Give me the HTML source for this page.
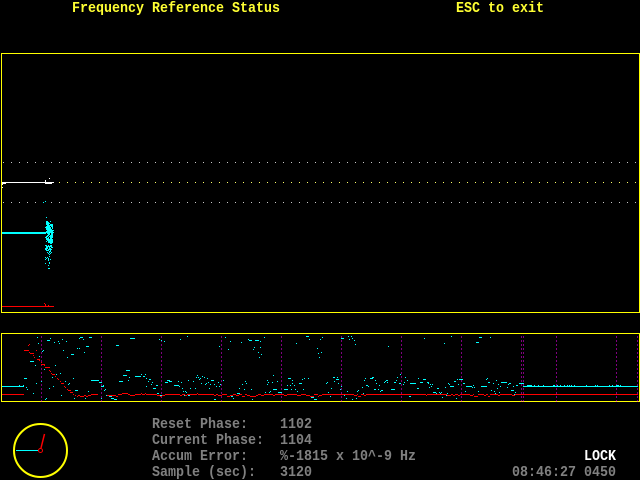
<!DOCTYPE html>
<html><head><meta charset="utf-8"><title>Frequency Reference Status</title>
<style>
html,body{margin:0;padding:0;background:#000;width:640px;height:480px;overflow:hidden}
svg{display:block}
text{font-family:"Liberation Mono",monospace;font-size:15px;font-weight:bold;white-space:pre}
.y{fill:#ffff33}
.g{fill:#808080}
.w{fill:#fff}
</style></head><body>
<svg width="640" height="480" viewBox="0 0 640 480" xmlns="http://www.w3.org/2000/svg">
<rect width="640" height="480" fill="#000"/>
<text class="y" x="72" y="12" textLength="208" lengthAdjust="spacingAndGlyphs">Frequency Reference Status</text>
<text class="y" x="456" y="12" textLength="88" lengthAdjust="spacingAndGlyphs">ESC to exit</text>
<g shape-rendering="crispEdges" fill="none" transform="translate(0,.5)">
<path stroke="#ffff00" d="M1 53h639M1 312h639M1.5 53v259M639.5 53v259M1 333h639M1 401h639M1.5 333v68M639.5 333v68"/>
<path stroke="#c8c8c8" stroke-dasharray="1 7" d="M3 162H639M3 202H639"/>
<path stroke="#ffff66" stroke-dasharray="1 7" d="M59 182H639"/>
<path stroke="#fff" d="M2 182h52M49 178h1M45 180h1M45 181h1M45 183h7M2 183h4M2 184h1M2 187h1"/>
<path stroke="#00ffff" d="M2 232h44M2 233h44M45 201h1M43 202h1M46 217h1M46 221h2M50 221h1M46 222h3M46 223h4M46 224h3M50 224h3M47 225h6M46 226h4M51 226h2M45 227h6M52 227h1M46 228h5M52 228h1M46 229h6M47 230h7M46 231h7M46 232h8M47 233h3M51 233h2M48 234h2M51 234h2M47 235h2M50 235h3M46 236h2M49 236h4M45 237h2M48 237h1M50 237h3M46 238h3M50 238h2M46 239h7M47 240h6M46 241h1M48 241h5M48 242h5M50 243h2M45 245h2M48 245h1M50 245h2M46 246h6M46 247h2M49 247h1M51 247h2M45 248h3M49 248h2M45 249h2M48 249h4M46 250h3M50 250h1M49 251h2M47 252h1M49 252h1M51 252h1M48 253h1M50 253h1M49 254h1M49 256h1M45 257h1M47 257h1M46 258h1M48 258h1M45 259h1M48 259h1M50 259h1M48 260h1M49 262h1M45 263h1M49 263h1M48 265h1M48 268h2"/>
<path stroke="#ff0000" d="M2 306h52M44 303h1M45 304h1M45 305h1M48 305h1"/>
<g stroke="#ff00ff" stroke-dasharray="1 3">
<path d="M41.5 336V401M101.5 336V401M161.5 336V401M221.5 336V401M281.5 336V401M341.5 336V401M401.5 336V401M461.5 336V401M521.5 336V401M523.5 336V401M556.5 336V401M616.5 336V401M637.5 336V401"/>
</g>
<path stroke="#00ffff" d="M2 386h18M20 386h4M19 385h1M23 385h1M26 387h1M27 389h1M33 393h1M37 337h1M38 343h1M50 338h1M47 340h3M54 342h1M58 341h1M59 343h1M62 339h1M66 341h1M79 338h1M80 337h3M83 339h1M89 337h3M86 346h3M77 348h1M79 348h1M63 350h1M84 352h1M71 354h3M67 357h1M43 350h1M42 351h1M39 356h1M34 357h1M30 361h4M35 365h1M55 365h1M44 369h1M56 374h1M60 373h1M52 377h1M24 378h3M73 378h1M91 380h8M99 382h3M103 385h1M101 386h3M105 389h1M104 390h1M88 391h1M75 390h3M69 383h1M68 384h1M65 381h1M41 381h1M36 383h1M49 388h1M53 386h1M61 395h1M74 398h1M85 398h1M46 398h1M45 399h1M101 398h1M106 395h3M109 396h3M111 398h3M114 399h3M116 345h3M126 370h4M123 375h4M119 381h4M129 377h1M128 380h1M130 338h5M135 376h6M141 374h1M145 374h1M143 376h2M146 378h1M149 379h2M148 381h1M152 382h1M151 384h1M156 385h2M146 386h1M153 388h3M157 393h2M159 395h5M159 339h1M161 340h1M164 341h1M180 339h1M187 336h1M165 382h3M167 380h3M169 381h3M174 385h5M178 381h1M181 382h1M179 386h1M182 388h1M183 391h1M185 391h1M186 392h1M184 395h1M188 395h2M188 380h1M193 381h1M190 388h1M195 388h1M197 375h1M196 377h1M198 377h1M199 379h1M200 378h1M202 376h1M201 383h1M204 377h1M207 378h1M205 384h1M206 383h1M208 382h1M210 384h1M211 380h3M209 388h1"/>
<path stroke="#00ffff" d="M225 337h1M230 341h1M241 342h1M248 339h1M249 340h3M255 340h4M264 337h1M260 341h1M260 347h1M254 347h1M253 349h1M228 349h1M219 346h1M258 352h1M261 354h1M259 357h1M306 336h3M309 339h1M320 339h1M322 337h1M296 343h1M317 348h1M321 352h1M318 353h1M319 357h1M341 338h3M348 336h1M351 336h1M349 339h1M352 338h1M354 340h1M355 344h1M388 346h1M424 338h1M273 375h1M288 378h3M302 379h1M304 378h1M308 378h1M292 380h1M267 380h1M268 382h1M272 382h1M267 384h1M277 381h1M245 381h1M246 383h1M242 384h1M287 385h1M290 385h1M294 385h1M292 383h1M299 383h3M218 382h1M223 380h1M214 384h1M220 384h1M216 386h1M219 386h1M239 388h1M244 389h1M251 389h1M273 389h4M284 389h4M291 389h1M295 389h1M303 389h1M297 391h1M265 392h1M270 391h1M269 392h1M278 392h4M237 393h3M231 396h2M233 398h1M227 396h1M214 399h2M252 399h1M311 397h3M314 399h3M330 396h1M324 394h1M328 392h1M331 388h1M326 383h1M327 382h1M333 377h2M336 379h3M337 377h1M334 381h1M338 383h1M341 386h1M340 389h1M347 391h1M344 395h1M346 398h1M352 399h1M356 398h1M357 391h1M358 390h1M363 393h1M362 387h1M366 385h2M368 386h1M364 380h1M365 378h1M370 378h3M372 377h2M375 380h1M376 383h1M379 385h1M374 389h2M378 389h1M380 391h1M381 390h2M384 382h1M385 381h1M386 380h2M387 382h1M391 389h4M394 382h2M397 377h1M396 380h1M399 383h2M403 384h1M400 374h1M404 382h1M405 377h1M407 380h1M410 383h6M420 382h3M418 378h1M423 379h3M417 388h2M409 396h2"/>
<path stroke="#00ffff" d="M451 336h1M479 337h3M490 337h1M444 343h1M476 342h3M427 382h2M428 383h1M430 384h1M432 384h1M429 387h1M431 386h1M437 388h2M433 392h3M436 393h1M439 392h1M441 392h1M440 393h1M442 397h1M445 387h1M448 383h1M449 384h1M450 386h2M452 386h2M447 393h1M446 395h1M456 398h1M454 381h2M457 379h1M459 379h4M463 383h2M458 384h1M465 391h1M466 386h6M473 385h1M472 387h1M474 387h1M475 396h1M478 391h1M481 386h6M486 379h1M487 378h1M488 382h2M493 383h1M496 380h1M498 384h1M500 386h1M497 388h1M491 390h1M494 391h1M495 393h1M499 392h1M492 394h1M501 382h6M507 387h1M508 384h1M509 383h2M513 386h1M511 390h3M516 385h2M515 392h1M519 383h5M514 394h1"/>
<path stroke="#00ffff" d="M523 386h115M527 385h5M534 385h1M538 385h1M543 385h1M553 385h2M557 385h1M560 385h1M564 385h1M567 385h1M569 385h1M571 385h1M574 385h1M586 385h1M595 385h1M597 385h1M609 385h1M612 385h1M616 385h3M620 385h1"/>
<path stroke="#ff0000" d="M24 350h5M28 345h1M29 344h1M29 352h1M30 353h4M33 355h1M34 357h1M36 350h1M37 359h3M39 360h1M41 362h1M41 364h4M44 365h1M45 367h5M49 370h1M50 371h1M51 373h1M52 374h3M55 376h1M57 378h1M58 379h1M60 381h1M61 383h3M64 386h1M65 387h1M67 389h1M68 390h3M70 392h3M73 394h1M75 395h1M77 396h1M78 395h2M80 396h4M84 395h2M86 396h2M88 395h3"/>
<path stroke="#ff0000" d="M2 394h22M91 394h7M98 394h0M107 395h4M111 395h5M116 396h2M118 394h4M122 393h6M128 394h2M130 395h5M135 394h6M141 393h1M142 394h3M145 393h1M146 394h11M157 395h3M160 396h2M162 395h3M165 394h15M180 395h2M182 394h3M185 395h2M187 394h10M197 393h1M198 394h16M214 395h2M216 394h2M218 395h4M222 394h5M227 396h3M230 395h3M233 394h3M236 395h3M239 394h3M242 396h3M245 394h2M247 395h3M250 396h6M256 395h2M258 394h3M261 395h3M264 394h9M273 395h2M275 394h9M284 395h3M287 394h10M297 395h4M301 394h5M306 395h4M310 396h4M314 394h4M318 396h1M319 395h3M322 394h32M354 395h3M357 394h1M358 396h3M361 394h3M364 395h2M366 394h54M420 394h6M426 395h1M427 394h20M447 395h4M451 394h2M453 395h2M455 394h3M458 395h2M460 394h10M470 395h3M473 394h1M474 396h4M478 394h6M484 395h2M486 394h2M488 396h2M490 394h8M498 395h2M500 394h12M512 395h3M515 394h123"/>
</g>
<text class="g" x="152" y="428" textLength="96" lengthAdjust="spacingAndGlyphs">Reset Phase:</text>
<text class="g" x="280" y="428" textLength="32" lengthAdjust="spacingAndGlyphs">1102</text>
<text class="g" x="152" y="444" textLength="112" lengthAdjust="spacingAndGlyphs">Current Phase:</text>
<text class="g" x="280" y="444" textLength="32" lengthAdjust="spacingAndGlyphs">1104</text>
<text class="g" x="152" y="460" textLength="96" lengthAdjust="spacingAndGlyphs">Accum Error:</text>
<text class="g" x="280" y="460" textLength="136" lengthAdjust="spacingAndGlyphs">%-1815 x 10^-9 Hz</text>
<text class="g" x="152" y="476" textLength="104" lengthAdjust="spacingAndGlyphs">Sample (sec):</text>
<text class="g" x="280" y="476" textLength="32" lengthAdjust="spacingAndGlyphs">3120</text>
<text class="w" x="584" y="460" textLength="32" lengthAdjust="spacingAndGlyphs">LOCK</text>
<text class="g" x="512" y="476" textLength="104" lengthAdjust="spacingAndGlyphs">08:46:27 0450</text>
<circle cx="40.5" cy="450.5" r="26.5" fill="none" stroke="#ffff00" stroke-width="2"/>
<path d="M16 450.5H38" stroke="#00ffff" stroke-width="1" shape-rendering="crispEdges" fill="none"/>
<path d="M41 448L44.5 434" stroke="#ff0000" stroke-width="1.5" fill="none"/>
<circle cx="40.5" cy="450.5" r="2" fill="none" stroke="#ff0000" stroke-width="1"/>
</svg>
</body></html>
